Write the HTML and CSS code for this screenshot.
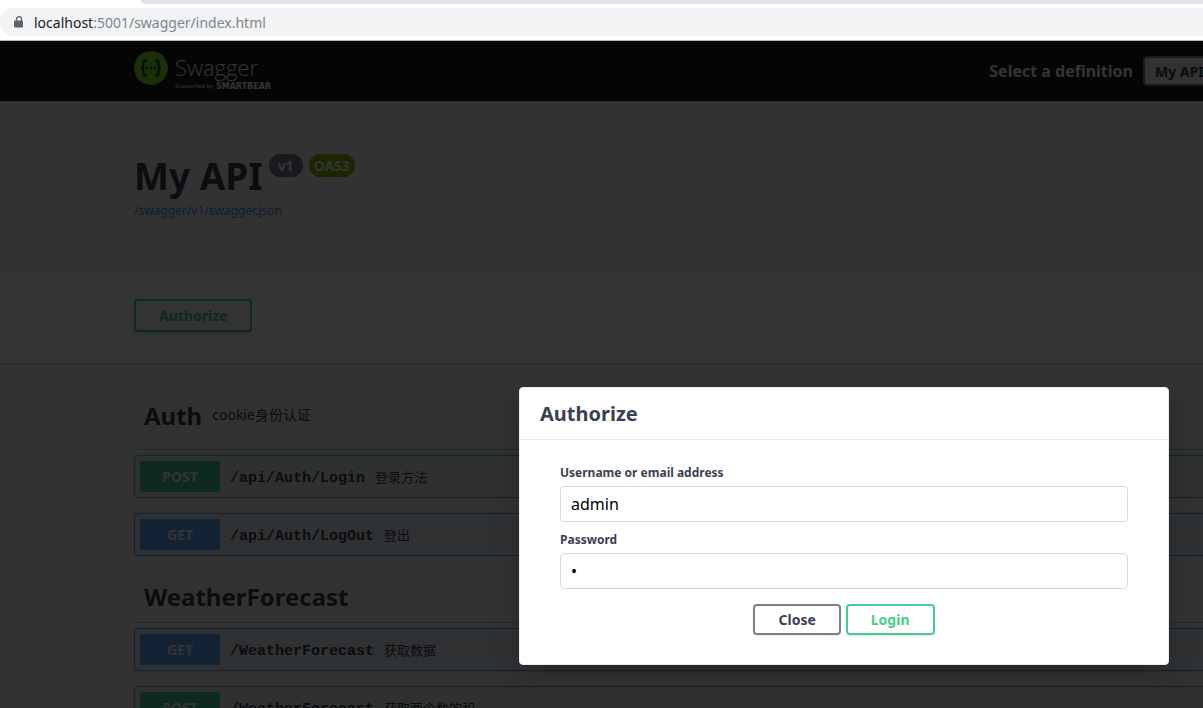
FILE: index.html
```html
<!DOCTYPE html>
<html lang="en">
<head>
  <meta charset="UTF-8">
  <meta name="viewport" content="width=device-width, initial-scale=1.0">
  <title>Swagger UI</title>
  <link rel="stylesheet" href="styles.css">
</head>
<body>
  <div class="browser-bar">
    <div class="tab-strip"></div>
    <div class="address">
      <svg class="lock" width="10" height="12" viewBox="0 0 10 12">
        <path d="M2.5 5V3.2a2.5 2.5 0 0 1 5 0V5" fill="none" stroke="#5f6368" stroke-width="1.3"/>
        <rect x="0" y="4.5" width="9" height="7" rx="1" fill="#5f6368"/>
      </svg>
      <span class="url"><span class="host">localhost</span>:5001/swagger/index.html</span>
    </div>
  </div>

  <div class="app">
    <header class="topbar">
      <a class="logo" href="#">
        <svg width="34" height="34" viewBox="0 0 34 34">
          <circle cx="17" cy="17" r="17" fill="#85ea2d"/>
          <g fill="none" stroke="#173647" stroke-width="2">
            <path d="M13 9.5h-1.2q-2.3 0-2.3 2.3v2.4q0 2.8-2.5 2.8q2.5 0 2.5 2.8v2.4q0 2.3 2.3 2.3H13"/>
            <path d="M21 9.5h1.2q2.3 0 2.3 2.3v2.4q0 2.8 2.5 2.8q-2.5 0-2.5 2.8v2.4q0 2.3-2.3 2.3H21"/>
          </g>
          <g fill="#173647">
            <circle cx="13" cy="17" r="1.2"/>
            <circle cx="17" cy="17" r="1.2"/>
            <circle cx="21" cy="17" r="1.2"/>
          </g>
        </svg>
        <span class="logo-text">
          <span class="logo-name">Swagger<small>.</small></span>
          <span class="logo-by">Supported by <b>SMARTBEAR</b></span>
        </span>
      </a>
      <label class="definition-label" for="definition">Select a definition</label>
      <select id="definition" class="definition">
        <option>My API V1</option>
      </select>
    </header>

    <section class="info">
      <div class="title-row">
        <h1>My API</h1>
        <span class="badge">v1</span>
        <span class="badge oas">OAS3</span>
      </div>
      <a class="json-link" href="#">/swagger/v1/swagger.json</a>
    </section>

    <section class="scheme">
      <button class="btn authorize">Authorize</button>
    </section>

    <main class="operations">
      <div class="tag">
        <h3>Auth</h3>
        <p>cookie身份认证</p>
      </div>
      <div class="opblock post">
        <span class="method">POST</span>
        <span class="path">/api/Auth/Login</span>
        <span class="summary">登录方法</span>
      </div>
      <div class="opblock get">
        <span class="method">GET</span>
        <span class="path">/api/Auth/LogOut</span>
        <span class="summary">登出</span>
      </div>
      <div class="tag">
        <h3>WeatherForecast</h3>
      </div>
      <div class="opblock get">
        <span class="method">GET</span>
        <span class="path">/WeatherForecast</span>
        <span class="summary">获取数据</span>
      </div>
      <div class="opblock post">
        <span class="method">POST</span>
        <span class="path">/WeatherForecast</span>
        <span class="summary">获取两个数的和</span>
      </div>
    </main>

    <div class="backdrop">
      <div class="modal" role="dialog" aria-labelledby="modal-title">
        <h2 id="modal-title">Authorize</h2>
        <form class="modal-body">
          <label for="username">Username or email address</label>
          <input type="text" id="username" value="admin">
          <label for="password">Password</label>
          <input type="password" id="password" value="1">
          <div class="modal-buttons">
            <button type="button" class="btn close">Close</button>
            <button type="button" class="btn login">Login</button>
          </div>
        </form>
      </div>
    </div>
  </div>
</body>
</html>
```
FILE: styles.css
```css
* {
  box-sizing: border-box;
}
body {
  font-family: "Noto Sans", "Noto Sans CJK SC", sans-serif;
  margin: 0;
  height: 100vh;
  display: flex;
  flex-direction: column;
  overflow: hidden;
  color: #3b4151;
  background: #fff;
}
h1, h2, h3, p {
  margin: 0;
}

/* browser address bar */
.browser-bar {
  flex: none;
  height: 41px;
  border-bottom: 1px solid #b5b8bb;
}
.tab-strip {
  height: 4px;
  margin-left: 141px;
  background: #dee1e6;
  border-bottom-left-radius: 6px;
}
.address {
  display: flex;
  align-items: center;
  gap: 10px;
  height: 28px;
  margin-top: 4px;
  padding-left: 14px;
  background: #f1f3f4;
  border-radius: 14px 0 0 14px;
}
.url {
  font-size: 14px;
  color: #80868b;
}
.host {
  color: #202124;
}

.app {
  flex: 1;
  position: relative;
  overflow: hidden;
  background: #fafafa;
}
.topbar {
  display: flex;
  align-items: center;
  height: 60px;
  padding-left: 134px;
  background: #1b1b1b;
  color: #fff;
}
.logo {
  display: flex;
  gap: 7px;
  height: 40px;
  color: #fff;
  text-decoration: none;
}
.logo-text {
  display: flex;
  flex-direction: column;
}
.logo-name {
  height: 30px;
  font-family: "Open Sans", sans-serif;
  font-size: 22px;
  font-weight: 300;
  line-height: 32px;
}
.logo-name small {
  font-size: 10px;
}
.logo-by {
  display: flex;
  align-items: center;
  gap: 3px;
  height: 10px;
  font-size: 6px;
}
.logo-by b {
  font-family: "DejaVu Sans", sans-serif;
  font-size: 8px;
}
.definition-label {
  margin-left: auto;
  font-size: 16px;
  font-weight: 700;
}
.definition {
  flex: none;
  width: 200px;
  height: 30px;
  margin: 0 -140px 0 10px;
  padding: 0 10px;
  appearance: none;
  border: 2px solid #62a03f;
  border-radius: 4px;
  background: #f7f7f7;
  color: #3b4151;
  font-family: inherit;
  font-size: 14px;
  font-weight: 700;
}

.info {
  height: 168px;
  padding: 50px 0 0 134px;
}
.title-row {
  display: flex;
  gap: 6px;
}
.info h1 {
  font-size: 37px;
  line-height: 50px;
}
.badge {
  height: 23px;
  margin-top: 3px;
  padding: 0 9px;
  border-radius: 12px;
  background: #7d8492;
  color: #fff;
  font-size: 14px;
  font-weight: 700;
  line-height: 23px;
}
.badge.oas {
  padding: 0 5px;
  background: #89bf04;
}
.json-link {
  display: block;
  font-size: 12px;
  line-height: 20px;
  color: #4990e2;
  text-decoration: none;
}

.scheme {
  height: 94px;
  padding: 30px 0 0 134px;
  background: #fff;
  box-shadow: 0 1px 2px rgba(0,0,0,0.3);
}
.btn {
  height: 31px;
  padding: 0 23px;
  border: 2px solid gray;
  border-radius: 4px;
  background: transparent;
  box-shadow: 0 1px 2px rgba(0,0,0,0.1);
  color: #3b4151;
  font-family: inherit;
  font-size: 14px;
  font-weight: 700;
}
.btn.authorize {
  height: 33px;
}
.btn.authorize, .btn.login {
  border-color: #49cc90;
  color: #49cc90;
}

.operations {
  padding: 18px 0 0 134px;
}
.tag {
  display: flex;
  align-items: center;
  margin-bottom: 5px;
  padding: 10px;
  border-bottom: 1px solid rgba(59,65,81,0.3);
}
.tag h3 {
  font-size: 24px;
  line-height: 31px;
}
.tag p {
  margin: 15px 10px;
  font-size: 14px;
  line-height: 18px;
}
.opblock {
  display: flex;
  align-items: center;
  gap: 10px;
  height: 43px;
  margin: 0 -4px 15px 0;
  padding: 5px;
  border: 1px solid;
  border-radius: 4px;
  box-shadow: 0 0 3px rgba(0,0,0,0.19);
}
.post {
  border-color: #49cc90;
  background: rgba(73,204,144,0.1);
}
.get {
  border-color: #61affe;
  background: rgba(97,175,254,0.1);
}
.method {
  width: 80px;
  border-radius: 3px;
  color: #fff;
  font-size: 14px;
  font-weight: 700;
  line-height: 31px;
  text-align: center;
}
.post .method {
  background: #49cc90;
}
.get .method {
  background: #61affe;
}
.path {
  padding-top: 4px;
  font-family: "Liberation Mono", monospace;
  font-size: 15px;
  font-weight: 700;
}
.summary {
  font-size: 13px;
}

/* authorize dialog */
.backdrop {
  position: absolute;
  inset: 0;
  display: flex;
  justify-content: flex-end;
  align-items: flex-end;
  padding: 0 34px 43px;
  background: rgba(0,0,0,0.8);
}
.modal {
  width: 650px;
  border: 1px solid #ebebeb;
  border-radius: 4px;
  background: #fff;
  box-shadow: 0 10px 30px rgba(0,0,0,0.2);
}
.modal h2 {
  padding: 0 20px;
  border-bottom: 1px solid #ebebeb;
  font-size: 20px;
  line-height: 51px;
}
.modal-body {
  display: flex;
  flex-direction: column;
  padding: 24px 40px 29px;
}
.modal-body label {
  font-size: 12px;
  font-weight: 700;
  line-height: 18px;
}
.modal-body input {
  height: 36px;
  margin: 4px 0 9px;
  padding: 0 10px;
  border: 1px solid #d9d9d9;
  border-radius: 4px;
  background: #fff;
  color: #000;
  font-family: inherit;
  font-size: 16px;
}
.modal-buttons {
  display: flex;
  justify-content: center;
  gap: 5px;
  margin-top: 6px;
}
```
